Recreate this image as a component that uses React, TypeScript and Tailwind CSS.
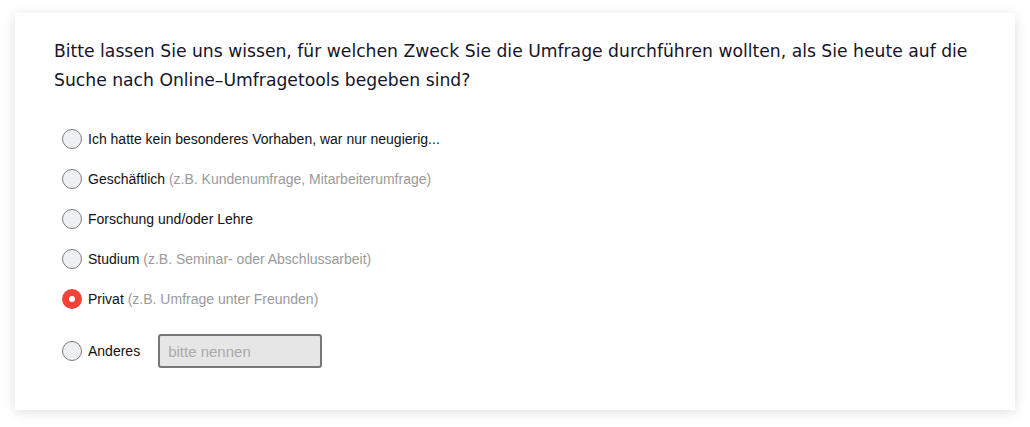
const options = [
  { label: 'Ich hatte kein besonderes Vorhaben, war nur neugierig...', hint: '' },
  { label: 'Geschäftlich', hint: '(z.B. Kundenumfrage, Mitarbeiterumfrage)' },
  { label: 'Forschung und/oder Lehre', hint: '' },
  { label: 'Studium', hint: '(z.B. Seminar- oder Abschlussarbeit)' },
  { label: 'Privat', hint: '(z.B. Umfrage unter Freunden)', checked: true },
];

function Radio({ checked }: { checked?: boolean }) {
  if (checked) {
    return (
      <span className="flex h-5 w-5 shrink-0 items-center justify-center rounded-full bg-[#f44336]">
        <span className="h-[6px] w-[6px] rounded-full bg-white" />
      </span>
    );
  }
  return <span className="h-5 w-5 shrink-0 rounded-full border border-[#7d7d7d] bg-[#eef0f1]" />;
}

export default function App() {
  return (
    <div className="h-[427px] w-[1030px] bg-white pl-[15px] pt-[13px]">
      <div className="h-[397px] w-[1000px] bg-white pl-[39px] pt-[24px] shadow-[0_2px_12px_rgba(0,0,0,0.13)]">
        <h1 className="text-[17.2px] leading-[29px] text-[#14142a] font-['DejaVu_Sans',sans-serif]">
          Bitte lassen Sie uns wissen, für welchen Zweck Sie die Umfrage durchführen wollten, als Sie heute auf die
          <br />
          Suche nach Online–Umfragetools begeben sind?
        </h1>

        <div className="mt-[30px] flex flex-col pl-[8px] font-['Liberation_Sans',sans-serif] text-[14px] text-[#111]">
          {options.map((o) => (
            <label key={o.label} className="flex h-[40px] items-center gap-[6px] first:-mt-[6px] last:h-[39px]">
              <Radio checked={o.checked} />
              <span>
                {o.label}
                {o.hint && <span className="text-[#9a9a9a]"> {o.hint}</span>}
              </span>
            </label>
          ))}
          <div className="mt-[15px] flex items-center">
            <Radio />
            <span className="ml-[6px]">Anderes</span>
            <input
              placeholder="bitte nennen"
              className="ml-[18px] box-border h-[34px] w-[164px] rounded-[3px] border-2 border-[#777] bg-[#e6e6e6] px-[8px] text-[15px] placeholder:text-[#aaa] outline-none"
            />
          </div>
        </div>
      </div>
    </div>
  );
}
